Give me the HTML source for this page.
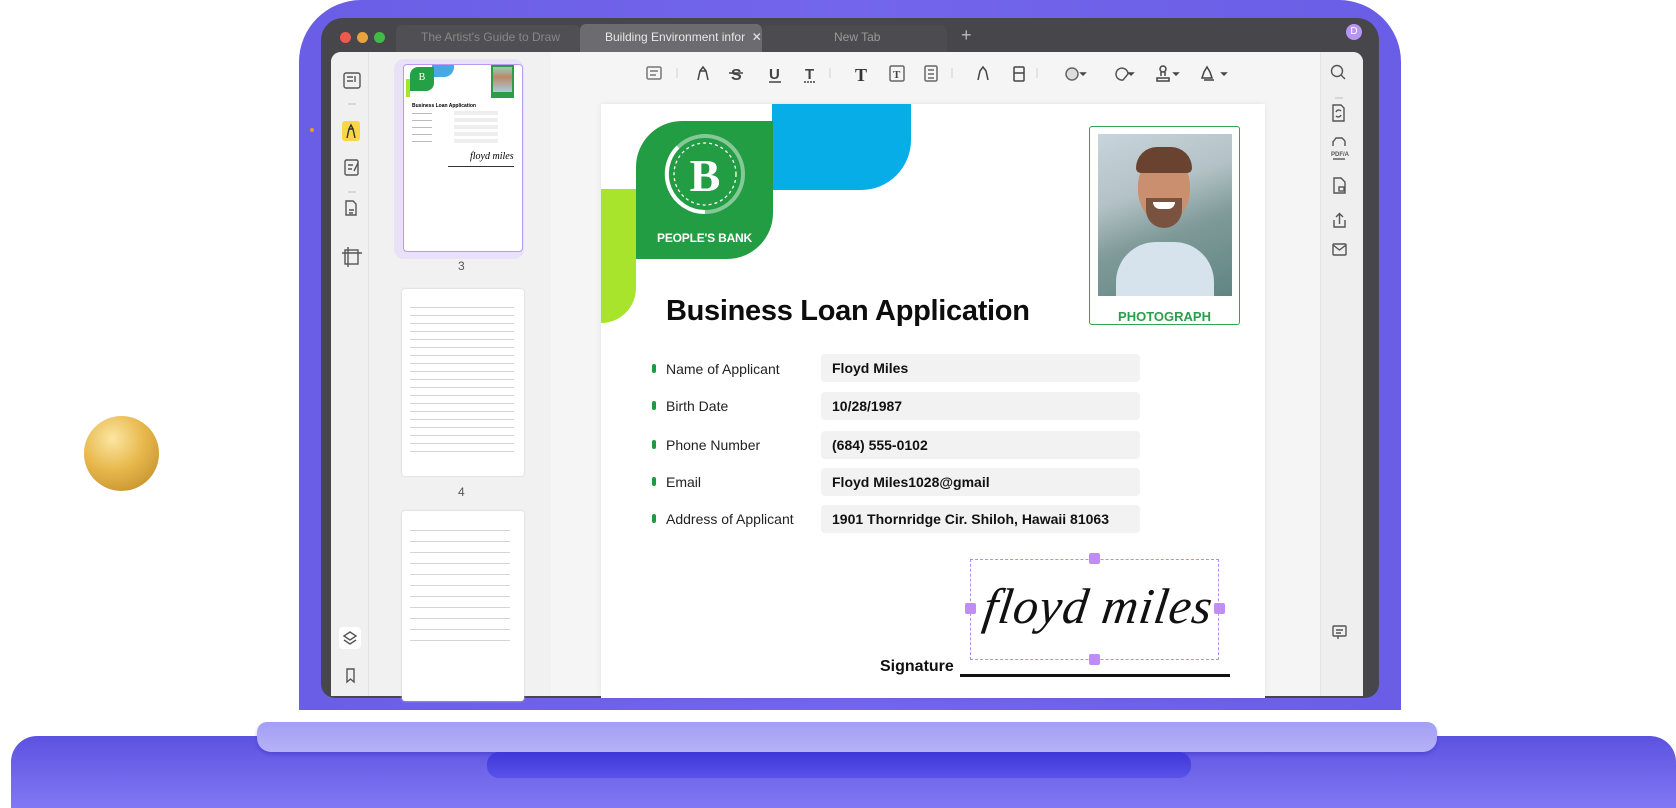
<!DOCTYPE html>
<html><head><meta charset="utf-8"><style>
*{margin:0;padding:0;box-sizing:border-box}
body{width:1676px;height:806px;overflow:hidden;background:#fff;position:relative;font-family:"Liberation Sans",sans-serif}
.a{position:absolute}
.tb{font-size:12px;color:#bbb;position:absolute;top:30px}
.lbl{position:absolute;left:666px;font-size:14px;color:#222}
.dot{position:absolute;left:652px;width:4px;height:9px;border-radius:2px;background:#1f9a43}
.val{position:absolute;left:821px;width:319px;height:28px;background:#f2f2f2;border-radius:4px;font-size:14px;font-weight:bold;color:#111;padding:7px 11px;line-height:14px}
.tl{position:absolute;height:2px;background:#bbb}
.hd{position:absolute;width:11px;height:11px;background:#c08cf7;border-radius:2px}
</style></head><body>
<div class="a" style="left:84px;top:416px;width:75px;height:75px;border-radius:50%;background:radial-gradient(circle at 38% 30%,#fbe6a2 0,#e8b84c 45%,#b98523 100%)"></div>
<div class="a" style="left:11px;top:736px;width:1665px;height:72px;border-radius:26px 26px 0 0;background:linear-gradient(#5c52e1,#8178f3)"></div>
<div class="a" style="left:257px;top:722px;width:1180px;height:30px;border-radius:10px 10px 14px 14px;background:linear-gradient(#a29ef4,#b6b2f7);box-shadow:0 3px 3px rgba(60,50,200,.4)"></div>
<div class="a" style="left:487px;top:752px;width:704px;height:26px;border-radius:12px;background:linear-gradient(#3e36d8,#5a52e8)"></div>
<div class="a" style="left:299px;top:0;width:1102px;height:710px;border-radius:62px 62px 0 0;background:linear-gradient(90deg,#6a5ee6,#7366ec 50%,#6a5ee6)"></div>
<div class="a" style="left:321px;top:18px;width:1058px;height:680px;border-radius:22px 22px 14px 14px;background:#47474b"></div>
<div class="a" style="left:340px;top:32px;width:11px;height:11px;border-radius:50%;background:#ef5a4f"></div>
<div class="a" style="left:357px;top:32px;width:11px;height:11px;border-radius:50%;background:#e8a33c"></div>
<div class="a" style="left:374px;top:32px;width:11px;height:11px;border-radius:50%;background:#3fbb46"></div>
<div class="a" style="left:396px;top:25px;width:184px;height:27px;background:#4f4f54;border-radius:6px 6px 0 0"></div>
<div class="tb" style="left:421px;color:#888">The Artist's Guide to Draw</div>
<div class="a" style="left:580px;top:24px;width:182px;height:28px;background:#6b6b70;border-radius:6px 6px 0 0"></div>
<div class="tb" style="left:605px;color:#e8e8e8">Building Environment infor&nbsp; ✕</div>
<div class="a" style="left:762px;top:25px;width:185px;height:27px;background:#4c4c50;border-radius:6px 6px 0 0"></div>
<div class="tb" style="left:834px;color:#999">New Tab</div>
<div class="tb" style="left:961px;top:25px;font-size:18px;color:#bbb">+</div>
<div class="a" style="left:1346px;top:24px;width:16px;height:16px;border-radius:50%;background:#b895f5;color:#fff;font-size:10px;text-align:center;line-height:16px">D</div>
<div class="a" style="left:331px;top:52px;width:1032px;height:644px;background:#f5f5f5;border-radius:10px 10px 0 0;overflow:hidden">
 <div class="a" style="left:0;top:0;width:38px;height:644px;background:#f0f0f0;border-right:1px solid #e4e4e4"></div>
 <div class="a" style="left:38px;top:0;width:182px;height:644px;background:#f1f1f1"></div>
 <div class="a" style="left:989px;top:0;width:43px;height:644px;background:#efefef;border-left:1px solid #e4e4e4"></div>
</div>
<svg class="a" style="left:331px;top:52px" width="38" height="644" fill="none" stroke="#555" stroke-width="1.4">
 <rect x="13" y="21" width="16" height="15" rx="2"/><path d="M16 25h6M16 29h6M24 24v6"/>
 <line x1="17" y1="52" x2="25" y2="52" stroke="#ccc"/>
 <rect x="11" y="69" width="18" height="20" rx="3" fill="#f7d747" stroke="none"/><path d="M16 86l2-9h4l2 9M18 77l2-4 2 4" stroke="#333"/>
 <rect x="14" y="108" width="13" height="15" rx="1.5"/><path d="M17 113h5M17 117h4M23 119l4-8"/>
 <line x1="17" y1="140" x2="25" y2="140" stroke="#ccc"/>
 <path d="M15 163v-14h7l3 3v11zM18 158h5M18 161h4"/>
 <rect x="14" y="198" width="13" height="14"/><path d="M17 195v20M11 201h20"/>
 <rect x="8" y="575" width="22" height="22" rx="4" fill="#fff" stroke="none"/><path d="M13 584l6-4 6 4-6 4zM13 588l6 4 6-4"/>
 <path d="M16 617h7v13l-3.5-3-3.5 3z"/>
</svg>
<div class="a" style="left:310px;top:128px;width:4px;height:4px;border-radius:50%;background:#e9a020"></div>
<div class="a" style="left:394px;top:59px;width:130px;height:200px;border-radius:10px;background:#e9e1f8"></div>
<div class="a" style="left:403px;top:64px;width:120px;height:188px;background:#fff;border:1px solid #b89af0;border-radius:4px;overflow:hidden">
 <div class="a" style="left:28px;top:0;width:22px;height:12px;background:#46a9e3;border-radius:0 0 10px 0"></div>
 <div class="a" style="left:6px;top:2px;width:24px;height:24px;background:#24a045;border-radius:8px 0 8px 0;color:#fff;font-size:10px;text-align:center;line-height:22px;font-family:'Liberation Serif',serif">B</div>
 <div class="a" style="left:2px;top:14px;width:4px;height:18px;background:#a9e42c"></div>
 <div class="a" style="left:87px;top:0;width:23px;height:33px;background:#2c9c4a;padding:2px"><div style="width:19px;height:25px;background:linear-gradient(#9cb,#b86 40%,#acd)"></div></div>
 <div class="a" style="left:8px;top:38px;font-size:5px;font-weight:bold">Business Loan Application</div>
 <div class="tl" style="left:8px;top:48px;width:20px;height:1px"></div><div class="a" style="left:50px;top:46px;width:44px;height:4px;background:#eee"></div>
 <div class="tl" style="left:8px;top:55px;width:20px;height:1px"></div><div class="a" style="left:50px;top:53px;width:44px;height:4px;background:#eee"></div>
 <div class="tl" style="left:8px;top:62px;width:20px;height:1px"></div><div class="a" style="left:50px;top:60px;width:44px;height:4px;background:#eee"></div>
 <div class="tl" style="left:8px;top:69px;width:20px;height:1px"></div><div class="a" style="left:50px;top:67px;width:44px;height:4px;background:#eee"></div>
 <div class="tl" style="left:8px;top:76px;width:20px;height:1px"></div><div class="a" style="left:50px;top:74px;width:44px;height:4px;background:#eee"></div>
 <div class="a" style="left:66px;top:86px;font-size:10px;font-style:italic;font-family:'Liberation Serif',serif">floyd miles</div>
 <div class="a" style="left:44px;top:101px;width:66px;height:1px;background:#333"></div>
</div>
<div class="a" style="left:458px;top:259px;font-size:12px;color:#555">3</div>
<div class="a" style="left:402px;top:289px;width:122px;height:187px;background:#fff;border-radius:3px;box-shadow:0 0 2px #ccc;background-image:repeating-linear-gradient(#fff 0 4px,#d4d4d4 4px 5px,#fff 5px 8px);background-size:104px 150px;background-position:8px 14px;background-repeat:no-repeat"></div>
<div class="a" style="left:458px;top:485px;font-size:12px;color:#555">4</div>
<div class="a" style="left:402px;top:511px;width:122px;height:190px;background:#fff;border-radius:3px;box-shadow:0 0 2px #ccc;background-image:repeating-linear-gradient(#fff 0 5px,#d4d4d4 5px 6px,#fff 6px 11px);background-size:100px 118px;background-position:8px 14px;background-repeat:no-repeat"></div>
<svg class="a" style="left:551px;top:56px" width="770" height="40" fill="none" stroke="#444" stroke-width="1.5">
 <rect x="96" y="11" width="14" height="12" rx="1.5" stroke="#777"/><path d="M99 15h8M99 19h6" stroke="#777"/>
 <line x1="126" y1="12" x2="126" y2="22" stroke="#ddd"/>
 <path d="M147 24l2-9 3-4 3 4 2 9M149 15h6"/>
 <text x="180" y="24" font-family="Liberation Sans" font-size="16" font-weight="bold" fill="#444" stroke="none">S</text><path d="M178 17h14"/>
 <text x="218" y="23" font-family="Liberation Sans" font-size="15" font-weight="bold" fill="#444" stroke="none">U</text><path d="M218 26h12"/>
 <text x="254" y="23" font-family="Liberation Sans" font-size="15" font-weight="bold" fill="#444" stroke="none">T</text><path d="M253 26h12" stroke-dasharray="2 1"/>
 <line x1="279" y1="12" x2="279" y2="22" stroke="#ddd"/>
 <text x="304" y="25" font-family="Liberation Serif" font-size="18" font-weight="bold" fill="#333" stroke="none">T</text>
 <rect x="339" y="10" width="14" height="15" rx="1.5" stroke="#666"/><text x="342" y="22" font-family="Liberation Serif" font-size="11" font-weight="bold" fill="#444" stroke="none">T</text>
 <rect x="374" y="10" width="12" height="15" rx="1.5" stroke="#666"/><path d="M377 14h6M377 18h6M377 22h6" stroke="#666"/>
 <line x1="401" y1="12" x2="401" y2="22" stroke="#ddd"/>
 <path d="M427 24l2-9 3-4 3 4 2 9"/>
 <rect x="463" y="11" width="10" height="14" rx="1"/><path d="M463 17h10"/>
 <line x1="486" y1="12" x2="486" y2="22" stroke="#ddd"/>
 <circle cx="521" cy="18" r="6" fill="#ddd" stroke="#666"/><path d="M530 17l2 2 2-2z" fill="#444"/>
 <path d="M572 24a6 6 0 1 1 5-6l-5 6z" stroke="#555"/><path d="M578 17l2 2 2-2z" fill="#444"/>
 <circle cx="612" cy="13" r="3"/><path d="M606 22h12v3h-12zM610 16v4M614 16v4"/><path d="M623 17l2 2 2-2z" fill="#444"/>
 <path d="M656 11l3 5 2 6h-10l2-6zM653 24h10"/><path d="M671 17l2 2 2-2z" fill="#444"/>
</svg>
<svg class="a" style="left:1320px;top:52px" width="43" height="644" fill="none" stroke="#555" stroke-width="1.4">
 <circle cx="17" cy="19" r="5.5"/><path d="M21 23l4 4"/>
 <line x1="15" y1="46" x2="23" y2="46" stroke="#ccc"/>
 <path d="M13 64v-11h8l3 3v13h-11zM16 60a3 3 0 0 1 5-1M21 63a3 3 0 0 1-5 1"/>
 <path d="M13 94v-5M25 94v-5M13 90l3-4h6l3 3"/><text x="11" y="104" font-size="6" font-weight="bold" fill="#555" stroke="none" font-family="Liberation Sans">PDF/A</text><path d="M13 107h12"/>
 <path d="M14 141v-15h7l4 4v11z"/><rect x="19" y="135" width="5" height="4"/>
 <path d="M14 168v7h11v-7M19.5 172v-10M16 165l3.5-3.5 3.5 3.5"/>
 <rect x="13" y="192" width="13" height="11" rx="1"/><path d="M13 193l6.5 5 6.5-5"/>
 <rect x="13" y="574" width="13" height="10" rx="1"/><path d="M16 578h7M16 581h5M18 584v3"/>
</svg>
<div class="a" style="left:601px;top:104px;width:664px;height:594px;background:#fff;box-shadow:0 0 6px rgba(0,0,0,.08);overflow:hidden">
 <div class="a" style="left:171px;top:0;width:139px;height:86px;background:#06ade6;border-radius:0 0 50px 0"></div>
 <div class="a" style="left:0;top:85px;width:35px;height:134px;background:#a9e42c;border-radius:0 0 42px 0"></div>
 <div class="a" style="left:35px;top:17px;width:137px;height:138px;background:#229d43;border-radius:46px 0 46px 0"></div>
 <div class="a" style="left:35px;top:127px;width:137px;text-align:center;color:#fff;font-weight:bold;font-size:12px;letter-spacing:-.2px">PEOPLE'S BANK</div>
 <svg class="a" style="left:59px;top:25px" width="90" height="100"><circle cx="45" cy="45" r="38" fill="none" stroke="rgba(255,255,255,.45)" stroke-width="4"/><path d="M45 83A38 38 0 0 1 18 18" fill="none" stroke="#fff" stroke-width="4"/><circle cx="45" cy="45" r="31" fill="none" stroke="#fff" stroke-width="1.3" stroke-dasharray="3 3"/><text x="45" y="62" text-anchor="middle" font-family="Liberation Serif" font-weight="bold" font-size="46" fill="#fff">B</text></svg>
 <div class="a" style="left:65px;top:191px;font-size:29px;font-weight:bold;color:#0d0d0d;letter-spacing:-.3px">Business Loan Application</div>
 <div class="a" style="left:488px;top:22px;width:151px;height:199px;border:1.5px solid #35a355;border-radius:3px"></div>
 <div class="a" style="left:497px;top:30px;width:134px;height:162px;background:linear-gradient(160deg,#c7d5dc 0,#b3c2c6 35%,#7f9a98 60%,#5f8583 100%);overflow:hidden">
  <div class="a" style="left:18px;top:108px;width:98px;height:70px;border-radius:40px 40px 0 0;background:#d6e2ec"></div>
  <div class="a" style="left:40px;top:20px;width:52px;height:68px;border-radius:48%;background:#c98f6f"></div>
  <div class="a" style="left:38px;top:13px;width:56px;height:26px;border-radius:26px 26px 6px 6px;background:#6a4330"></div>
  <div class="a" style="left:48px;top:64px;width:36px;height:30px;border-radius:0 0 18px 18px;background:#7a5240"></div>
  <div class="a" style="left:55px;top:68px;width:22px;height:7px;border-radius:0 0 10px 10px;background:#fff"></div>
 </div>
 <div class="a" style="left:488px;top:205px;width:151px;text-align:center;color:#2b9e4b;font-weight:bold;font-size:13px">PHOTOGRAPH</div>
</div>
<div class="dot" style="top:364px"></div><div class="lbl" style="top:361px">Name of Applicant</div><div class="val" style="top:354px">Floyd Miles</div>
<div class="dot" style="top:401px"></div><div class="lbl" style="top:398px">Birth Date</div><div class="val" style="top:392px">10/28/1987</div>
<div class="dot" style="top:440px"></div><div class="lbl" style="top:437px">Phone Number</div><div class="val" style="top:431px">(684) 555-0102</div>
<div class="dot" style="top:477px"></div><div class="lbl" style="top:474px">Email</div><div class="val" style="top:468px">Floyd Miles1028@gmail</div>
<div class="dot" style="top:514px"></div><div class="lbl" style="top:511px">Address of Applicant</div><div class="val" style="top:505px">1901 Thornridge Cir. Shiloh, Hawaii 81063</div>
<div class="a" style="left:970px;top:559px;width:249px;height:101px;border:1.5px dashed #b98af5"></div>
<div class="hd" style="left:1089px;top:553px"></div><div class="hd" style="left:1089px;top:654px"></div>
<div class="hd" style="left:965px;top:603px"></div><div class="hd" style="left:1214px;top:603px"></div>
<div class="a" style="left:984px;top:577px;font-family:'Liberation Serif',serif;font-style:italic;font-size:50px;color:#111;transform:skewX(-8deg);letter-spacing:1px">floyd miles</div>
<div class="a" style="left:880px;top:658px;font-size:16px;font-weight:bold;color:#111">Signature</div>
<div class="a" style="left:960px;top:674px;width:270px;height:2.5px;background:#111"></div>
</body></html>
